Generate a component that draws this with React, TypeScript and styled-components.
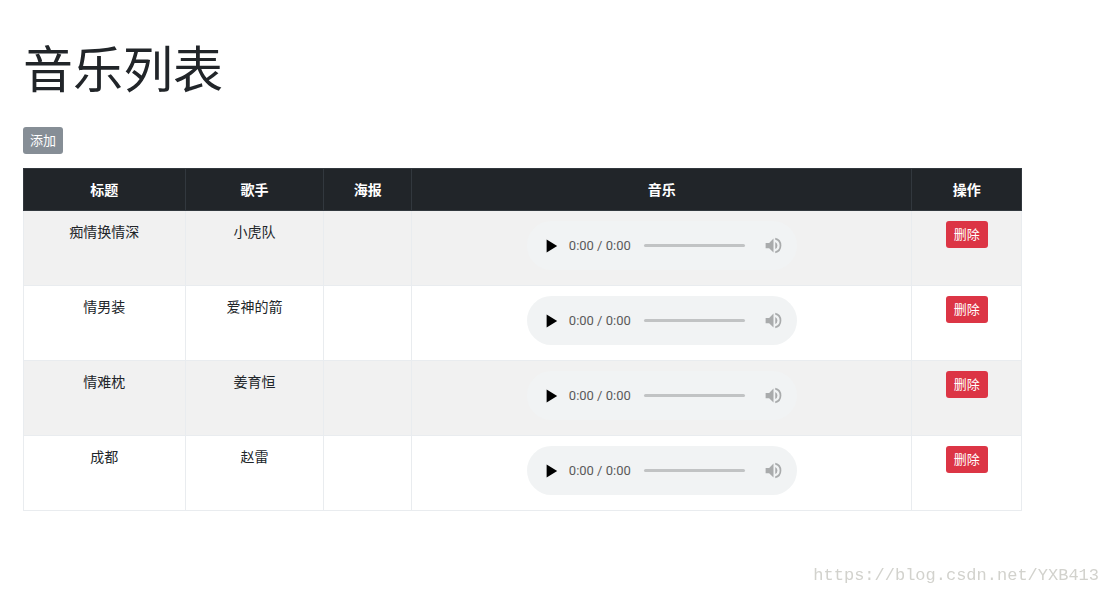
import React from "react";
import styled, { createGlobalStyle } from "styled-components";

const GlobalStyle = createGlobalStyle`
  *, *::before, *::after { box-sizing: border-box; }
  body {
    margin: 0;
    background: #fff;
    color: #212529;
    font-family: "Noto Sans CJK SC", "Noto Sans", sans-serif;
    font-size: 14px;
    line-height: 20px;
  }
`;

const Page = styled.main`
  padding: 28px 23px;
`;

const Title = styled.h1`
  margin: 0 0 23px;
  font-size: 50px;
  font-weight: 400;
  line-height: 76px;
`;

const Button = styled.button<{ $tone: "muted" | "danger" }>`
  display: block;
  padding: 3px ${(p) => (p.$tone === "danger" ? 8 : 7)}px 4px;
  border: 0;
  border-radius: 3px;
  background: ${(p) => (p.$tone === "danger" ? "#dc3545" : "#868e96")};
  color: #fff;
  font-family: inherit;
  font-size: 13px;
  line-height: 20px;
  cursor: pointer;
`;

const MusicTable = styled.table`
  width: 94%;
  margin-top: 14px;
  border-collapse: collapse;
  table-layout: fixed;
  text-align: center;
`;

const Column = styled.col<{ $share: number }>`
  width: ${(p) => p.$share}%;
`;

const HeadCell = styled.th`
  padding: 10px 10px 11px;
  border: 1px solid #32383e;
  background: #212529;
  color: #fff;
  font-weight: 700;
`;

const Row = styled.tr`
  &:nth-child(odd) {
    background: #f1f1f1;
  }
`;

const Cell = styled.td`
  height: 75px;
  padding: 10px;
  border: 1px solid #e9ecef;
  vertical-align: top;

  & > * {
    margin: 0 auto;
  }
`;

const Player = styled.div`
  display: flex;
  align-items: center;
  width: 270px;
  height: 49px;
  padding: 0 13px 0 16px;
  border-radius: 25px;
  background: #f1f3f4;
`;

const IconButton = styled.button`
  display: flex;
  padding: 0;
  border: 0;
  background: none;
  color: inherit;
`;

const Time = styled.span`
  margin: 0 13px 0 8px;
  color: #5a5a5a;
  font-family: Roboto, sans-serif;
  font-size: 13px;
  line-height: 20px;
  white-space: nowrap;
`;

const Seek = styled.input`
  appearance: none;
  flex: 1;
  min-width: 0;
  height: 3px;
  margin: 0 18px 0 0;
  border-radius: 2px;
  background: #c1c3c4;

  &::-webkit-slider-thumb {
    appearance: none;
    width: 0;
    height: 0;
  }
`;

const Watermark = styled.div`
  position: fixed;
  right: 10px;
  bottom: 9px;
  color: #d2d2cd;
  font-family: "Liberation Mono", monospace;
  font-size: 17px;
`;

const songs = [
  { title: "痴情换情深", singer: "小虎队" },
  { title: "情男装", singer: "爱神的箭" },
  { title: "情难枕", singer: "姜育恒" },
  { title: "成都", singer: "赵雷" },
];

const columns = [
  { name: "标题", share: 16.2 },
  { name: "歌手", share: 13.9 },
  { name: "海报", share: 8.8 },
  { name: "音乐", share: 50.1 },
  { name: "操作", share: 11 },
];

function AudioPlayer({ title }: { title: string }) {
  return (
    <Player role="group" aria-label={title}>
      <IconButton type="button" aria-label="播放">
        <svg width="18" height="18" viewBox="0 0 18 18" fill="#000">
          <path d="M3.6 2.6v12.8L14.2 9z" />
        </svg>
      </IconButton>
      <Time>0:00 / 0:00</Time>
      <Seek type="range" min={0} max={100} defaultValue={0} aria-label="进度" disabled />
      <IconButton type="button" aria-label="音量" disabled>
        <svg width="21" height="21" viewBox="0 0 24 24" fill="#a9abac">
          <path d="M3 9v6h4l5 5V4L7 9H3zm13.5 3A4.5 4.5 0 0 0 14 7.97v8.05A4.5 4.5 0 0 0 16.5 12zM14 3.23v2.06a7 7 0 0 1 0 13.42v2.06a9 9 0 0 0 0-17.54z" />
        </svg>
      </IconButton>
    </Player>
  );
}

export default function App() {
  return (
    <>
      <GlobalStyle />
      <Page>
        <Title>音乐列表</Title>
        <Button type="button" $tone="muted">添加</Button>
        <MusicTable>
          <colgroup>
            {columns.map((c) => (
              <Column key={c.name} $share={c.share} />
            ))}
          </colgroup>
          <thead>
            <tr>
              {columns.map((c) => (
                <HeadCell key={c.name} scope="col">{c.name}</HeadCell>
              ))}
            </tr>
          </thead>
          <tbody>
            {songs.map((s) => (
              <Row key={s.title}>
                <Cell>{s.title}</Cell>
                <Cell>{s.singer}</Cell>
                <Cell />
                <Cell>
                  <AudioPlayer title={s.title} />
                </Cell>
                <Cell>
                  <Button type="button" $tone="danger">删除</Button>
                </Cell>
              </Row>
            ))}
          </tbody>
        </MusicTable>
      </Page>
      <Watermark>https://blog.csdn.net/YXB413</Watermark>
    </>
  );
}
